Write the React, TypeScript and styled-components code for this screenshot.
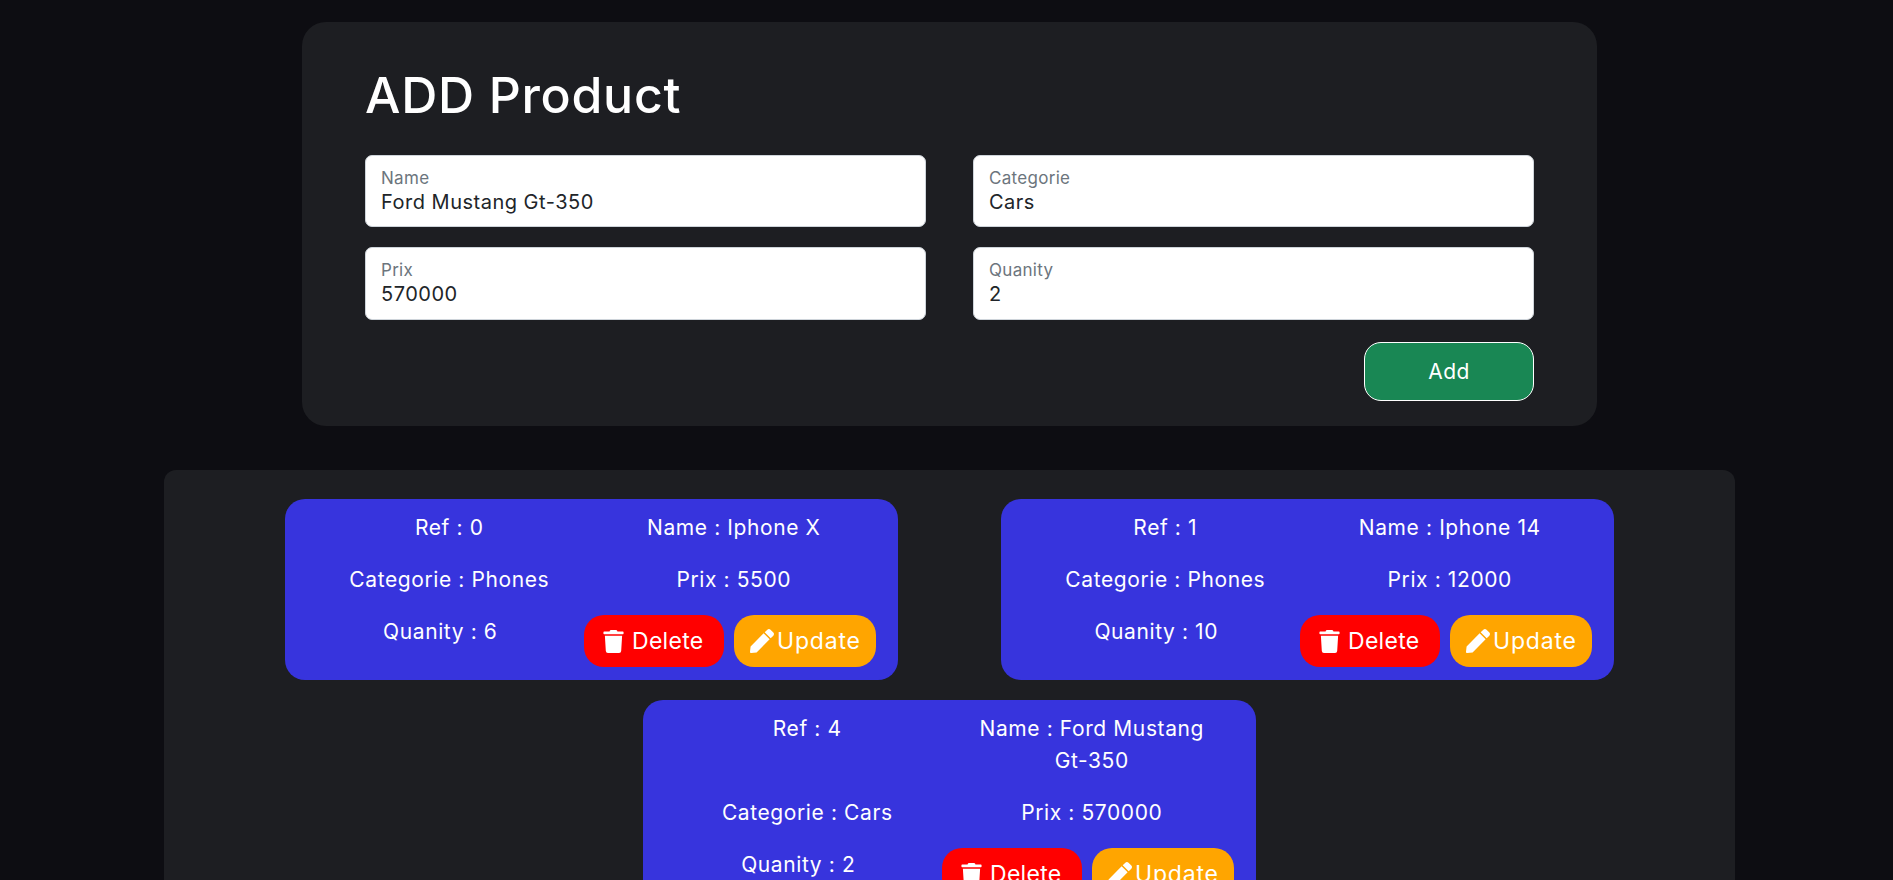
import React from "react";
import styled, { createGlobalStyle } from "styled-components";
import { FaPen, FaTrash } from "react-icons/fa";

const GlobalStyle = createGlobalStyle`
  html, body {
    margin: 0;
    padding: 0;
    height: 100%;
    overflow: hidden;
    background: #0d0d12;
    font-family: Inter, "Noto Sans", sans-serif;
    color: #fff;
  }
`;

const Page = styled.main`
  height: 880px;
  overflow: hidden;
  box-sizing: border-box;
  padding: 22px 0 0 6px;
  display: flex;
  flex-direction: column;
  align-items: center;
  gap: 44px;
`;

const FormCard = styled.section`
  width: 1295px;
  height: 404px;
  box-sizing: border-box;
  padding: 0 63px;
  background: #1d1e22;
  border-radius: 24px;
  flex: none;
`;

const Title = styled.h1`
  margin: 0;
  padding-top: 47px;
  height: 86px;
  font-size: 50px;
  line-height: 53px;
  font-weight: 500;
  letter-spacing: 0.7px;
`;

const FormGrid = styled.form`
  display: grid;
  grid-template-columns: 561px 561px;
  grid-template-rows: 72px 73px auto;
  column-gap: 47px;
  row-gap: 20px;
`;

const Field = styled.label`
  display: flex;
  flex-direction: column;
  box-sizing: border-box;
  padding: 11px 15px 0;
  background: #fff;
  border: 1px solid #ced4da;
  border-radius: 7px;
`;

const FieldLabel = styled.span`
  font-size: 17px;
  line-height: 22px;
  letter-spacing: 0.3px;
  color: #6c757d;
`;

const FieldInput = styled.input`
  border: 0;
  outline: 0;
  padding: 0;
  margin: 1px 0 0;
  background: transparent;
  font-family: inherit;
  font-size: 20px;
  line-height: 24px;
  letter-spacing: 0.5px;
  color: #212529;
`;

const AddRow = styled.div`
  grid-column: 1 / -1;
  display: flex;
  justify-content: flex-end;
  margin-top: 2px;
`;

const AddButton = styled.button`
  width: 170px;
  height: 59px;
  box-sizing: border-box;
  background: #198754;
  border: 1px solid #fff;
  border-radius: 17px;
  color: #fff;
  font-family: inherit;
  font-size: 21px;
  letter-spacing: 0.4px;
`;

const ListPanel = styled.section`
  width: 1571px;
  flex: none;
  box-sizing: border-box;
  padding: 29px 0 40px;
  background: #1d1e22;
  border-radius: 12px;
  display: flex;
  flex-wrap: wrap;
  justify-content: center;
  gap: 20px 103px;
`;

const ProductCard = styled.article`
  width: 613px;
  box-sizing: border-box;
  padding: 12px 22px 13px;
  background: #3734dd;
  border-radius: 20px;
  display: grid;
  grid-template-columns: minmax(0, 1fr) minmax(0, 1fr);
  row-gap: 19px;
`;

const Cell = styled.div`
  font-size: 21px;
  line-height: 32px;
  letter-spacing: 0.6px;
  text-align: center;
  padding: 1px 20px 0;
`;

// the buttons beside it take some of its column
const QuanityCell = styled(Cell)`
  padding-right: 38px;
`;

const Actions = styled.div`
  justify-self: end;
  display: flex;
  gap: 10px;
  width: max-content;
`;

const ActionButton = styled.button<{
  $bg: string;
  $width: number;
  $inset: number;
  $gap: number;
  $tracking: number;
}>`
  width: ${(p) => p.$width}px;
  height: 52px;
  border: 0;
  padding: 0 0 0 ${(p) => p.$inset}px;
  border-radius: 20px;
  background: ${(p) => p.$bg};
  color: #fff;
  font-family: inherit;
  font-size: 23px;
  letter-spacing: ${(p) => p.$tracking}px;
  display: flex;
  align-items: center;
  gap: ${(p) => p.$gap}px;
`;

const products = [
  { ref: 0, name: "Iphone X", categorie: "Phones", prix: 5500, quanity: 6 },
  { ref: 1, name: "Iphone 14", categorie: "Phones", prix: 12000, quanity: 10 },
  { ref: 4, name: "Ford Mustang Gt-350", categorie: "Cars", prix: 570000, quanity: 2 },
];

const fields = [
  { label: "Name", value: "Ford Mustang Gt-350" },
  { label: "Categorie", value: "Cars" },
  { label: "Prix", value: "570000" },
  { label: "Quanity", value: "2" },
];

export default function App() {
  return (
    <>
      <GlobalStyle />
      <Page>
        <FormCard>
          <Title>ADD Product</Title>
          <FormGrid>
            {fields.map((f) => (
              <Field key={f.label}>
                <FieldLabel>{f.label}</FieldLabel>
                <FieldInput defaultValue={f.value} />
              </Field>
            ))}
            <AddRow>
              <AddButton type="button">Add</AddButton>
            </AddRow>
          </FormGrid>
        </FormCard>
        <ListPanel>
          {products.map((p) => (
            <ProductCard key={p.ref}>
              <Cell>Ref : {p.ref}</Cell>
              <Cell>Name : {p.name}</Cell>
              <Cell>Categorie : {p.categorie}</Cell>
              <Cell>Prix : {p.prix}</Cell>
              <QuanityCell>Quanity : {p.quanity}</QuanityCell>
              <Actions>
                <ActionButton $bg="#ff0000" $width={140} $inset={18} $gap={7} $tracking={0.3}>
                  <FaTrash size={23} />
                  Delete
                </ActionButton>
                <ActionButton $bg="#ffa500" $width={142} $inset={16} $gap={3} $tracking={0.8}>
                  <FaPen size={24} />
                  Update
                </ActionButton>
              </Actions>
            </ProductCard>
          ))}
        </ListPanel>
      </Page>
    </>
  );
}
